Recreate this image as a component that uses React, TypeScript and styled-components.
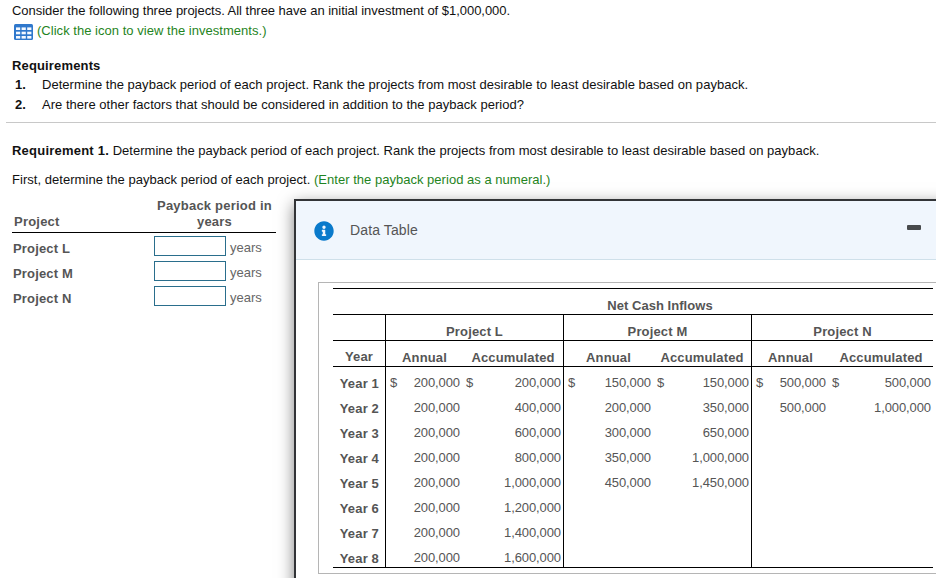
import React from 'react';
import styled, { createGlobalStyle } from 'styled-components';
import { FaInfoCircle } from 'react-icons/fa';

const GlobalStyle = createGlobalStyle`
  * { box-sizing: border-box; }
  html, body { margin: 0; padding: 0; background: #fff; overflow: hidden; }
  body { font: 13px/15px "Liberation Sans", Arial, sans-serif; color: #111; }
`;

const Page = styled.div`
  position: relative;
  width: 936px;
  height: 578px;
  overflow: hidden;
`;

const Problem = styled.section`
  height: 123px;
  margin-left: 6px;
  padding: 3px 0 0 6px;
  border-bottom: 1px solid #c8c8c8;
`;

const Line = styled.p<{ $top?: number; $spacing?: number }>`
  margin: ${(p) => p.$top ?? 0}px 0 0;
  letter-spacing: ${(p) => p.$spacing ?? 0}px;
  white-space: nowrap;
`;

const Hint = styled.span<{ $spacing?: number }>`
  color: #1f8422;
  letter-spacing: ${(p) => p.$spacing ?? 0.03}px;
`;

const IconLine = styled.div`
  display: flex;
  gap: 4px;
  margin: 5px 0 0 1px;
  height: 18px;
`;

const TableIcon = styled.svg`
  width: 20px;
  height: 18px;
  margin-top: 1px;
`;

const Heading = styled.h2`
  margin: 17px 0 4px;
  font-size: 13px;
  letter-spacing: 0.15px;
`;

const Requirements = styled.ol`
  display: grid;
  gap: 5px;
  margin: 0;
  padding: 0;
  list-style: none;
`;

const Requirement = styled.li`
  display: grid;
  grid-template-columns: 27px 1fr;
  padding-left: 3px;
  letter-spacing: 0.025px;
  white-space: nowrap;
`;

const Strong = styled.b`
  letter-spacing: 0.22px;
`;

const Answer = styled.section`
  padding: 20px 0 0 12px;
`;

const AnswerTable = styled.div`
  width: 264px;
  margin-top: 11px;
  color: #555;
`;

const AnswerHead = styled.div`
  display: grid;
  grid-template-columns: 1fr 124px;
  align-items: end;
  height: 35px;
  padding-left: 2px;
  border-bottom: 1px solid #000;
  font-weight: bold;
  line-height: 16px;
  letter-spacing: 0.22px;
`;

const Centered = styled.span`
  text-align: center;
  padding: 0 0 2px 1px;
`;

const HeadLabel = styled.span`
  padding-bottom: 2px;
`;

const AnswerRow = styled.label`
  display: grid;
  grid-template-columns: 141px 72px 1fr;
  height: 20px;
  margin-top: 5px;
  padding-left: 1px;

  &:first-of-type { margin-top: 3px; }
`;

const ProjectName = styled.b`
  padding-top: 5px;
  letter-spacing: 0.16px;
`;

const Field = styled.input`
  width: 72px;
  height: 20px;
  padding: 0 4px;
  border: 1px solid #2a6e8c;
  border-radius: 0;
  outline: none;
  background: #fff;
`;

const Unit = styled.span`
  padding: 4px 0 0 4px;
  color: #666;
`;

const Dialog = styled.section`
  position: absolute;
  left: 294px;
  top: 199px;
  width: 680px;
  height: 420px;
  border: 2px solid #323437;
  background: #fff;
  box-shadow: 0 5px 15px rgba(0, 0, 0, 0.5);
  color: #555;
`;

const HeaderBand = styled.div`
  background: #f0f6fd;
  border-bottom: 1px solid #cfe0ea;
`;

const DialogHeader = styled.header`
  display: flex;
  align-items: center;
  width: 640px;
  height: 58px;
  padding: 0 15px 0 18px;
`;

const InfoIcon = styled(FaInfoCircle)`
  width: 20px;
  height: 20px;
  margin-top: 2px;
  color: #0a7acb;
`;

const DialogTitle = styled.h3`
  flex: 1;
  margin: 1px 0 0 16px;
  font-size: 14px;
  font-weight: normal;
  letter-spacing: 0.12px;
`;

const Minimize = styled.button`
  width: 14px;
  height: 5px;
  margin: 0 0 5px;
  padding: 0;
  border: 0;
  border-radius: 1px;
  background: #484a4c;
`;

const Frame = styled.div`
  width: 640px;
  height: 292px;
  margin: 22px 0 0 22px;
  padding: 5px 0 0 14px;
  border: 1px solid #b5b5b5;
`;

const Sheet = styled.div`
  width: 600px;
  border: solid #000;
  border-width: 1px 0;
`;

const TitleRow = styled.div`
  height: 26px;
  padding: 9px 0 0 54px;
  border-bottom: 1px solid #000;
  text-align: center;
  font-weight: bold;
  letter-spacing: 0.04px;
`;

const GroupRow = styled.div`
  display: grid;
  grid-template-columns: 53px 178px 188px 1fr;
  height: 26px;
  border-bottom: 1px solid #000;
  font-weight: bold;
  text-align: center;
  letter-spacing: 0.14px;
`;

const columns = '53px 77px 101px 89px 99px 77px 1fr';

const ColumnRow = styled(GroupRow)`
  grid-template-columns: ${columns};
`;

const HeadCell = styled.span<{ $rule?: boolean; $top?: number }>`
  padding-top: ${(p) => p.$top ?? 9}px;
  border-right: ${(p) => (p.$rule ? '1px solid #000' : '0')};
`;

const DataRow = styled.div`
  display: grid;
  grid-template-columns: ${columns};
  height: 25px;
`;

const YearCell = styled.b`
  padding: 9px 6px 0 0;
  border-right: 1px solid #000;
  text-align: right;
  letter-spacing: 0.15px;
`;

const MoneyCell = styled.span<{ $rule?: boolean; $left: number; $right: number }>`
  display: flex;
  justify-content: space-between;
  padding: 8px ${(p) => p.$right}px 0 ${(p) => p.$left}px;
  border-right: ${(p) => (p.$rule ? '1px solid #000' : '0')};
  letter-spacing: -0.1px;
`;

type Entry = string | undefined;

const projects = ['L', 'M', 'N'];
const inflows: Entry[][] = [
  ['200,000', '200,000', '150,000', '150,000', '500,000', '500,000'],
  ['200,000', '400,000', '200,000', '350,000', '500,000', '1,000,000'],
  ['200,000', '600,000', '300,000', '650,000'],
  ['200,000', '800,000', '350,000', '1,000,000'],
  ['200,000', '1,000,000', '450,000', '1,450,000'],
  ['200,000', '1,200,000'],
  ['200,000', '1,400,000'],
  ['200,000', '1,600,000'],
];
const insets = [
  { left: 4, right: 3 },
  { left: 3, right: 2 },
  { left: 4, right: 2 },
  { left: 4, right: 2 },
  { left: 4, right: 3 },
  { left: 3, right: 2 },
];

function GridGlyph() {
  return (
    <TableIcon viewBox="0 0 20 18" aria-hidden="true">
      <rect x="1" y="0" width="19" height="16" rx="1.5" fill="#2f78cc" />
      {[3.4, 7.7, 12].map((y) =>
        [3, 8.6, 14.2].map((x) => (
          <rect key={`${x}-${y}`} x={x} y={y} width="4.2" height="2.6" fill="#f4f9ff" />
        )),
      )}
    </TableIcon>
  );
}

export default function App() {
  return (
    <>
      <GlobalStyle />
      <Page>
        <Problem>
          <Line $spacing={-0.03}>
            Consider the following three projects. All three have an initial investment of $1,000,000.
          </Line>
          <IconLine>
            <GridGlyph />
            <Hint $spacing={0.03}>(Click the icon to view the investments.)</Hint>
          </IconLine>
          <Heading>Requirements</Heading>
          <Requirements>
            <Requirement>
              <b>1.</b>
              <span>
                Determine the payback period of each project. Rank the projects from most desirable to least
                desirable based on payback.
              </span>
            </Requirement>
            <Requirement>
              <b>2.</b>
              <span>Are there other factors that should be considered in addition to the payback period?</span>
            </Requirement>
          </Requirements>
        </Problem>

        <Answer>
          <Line $spacing={0.03}>
            <Strong>Requirement 1.</Strong> Determine the payback period of each project. Rank the projects from
            most desirable to least desirable based on payback.
          </Line>
          <Line $top={14} $spacing={0.04}>
            First, determine the payback period of each project.{' '}
            <Hint $spacing={0.02}>(Enter the payback period as a numeral.)</Hint>
          </Line>
          <AnswerTable>
            <AnswerHead>
              <HeadLabel>Project</HeadLabel>
              <Centered>
                Payback period in
                <br />
                years
              </Centered>
            </AnswerHead>
            {projects.map((name) => (
              <AnswerRow key={name}>
                <ProjectName>Project {name}</ProjectName>
                <Field />
                <Unit>years</Unit>
              </AnswerRow>
            ))}
          </AnswerTable>
        </Answer>

        <Dialog>
          <HeaderBand>
            <DialogHeader>
              <InfoIcon />
              <DialogTitle>Data Table</DialogTitle>
              <Minimize aria-label="Minimize" />
            </DialogHeader>
          </HeaderBand>
          <Frame>
            <Sheet>
              <TitleRow>Net Cash Inflows</TitleRow>
              <GroupRow>
                <HeadCell $rule />
                {projects.map((name, i) => (
                  <HeadCell key={name} $rule={i < 2}>
                    Project {name}
                  </HeadCell>
                ))}
              </GroupRow>
              <ColumnRow>
                <HeadCell $rule $top={8}>
                  Year
                </HeadCell>
                {projects.map((name, i) => (
                  <React.Fragment key={name}>
                    <HeadCell>Annual</HeadCell>
                    <HeadCell $rule={i < 2}>Accumulated</HeadCell>
                  </React.Fragment>
                ))}
              </ColumnRow>
              {inflows.map((row, r) => (
                <DataRow key={r}>
                  <YearCell>Year {r + 1}</YearCell>
                  {insets.map(({ left, right }, c) => (
                    <MoneyCell key={c} $left={left} $right={right} $rule={c === 1 || c === 3}>
                      <span>{r === 0 ? '$' : ''}</span>
                      <span>{row[c]}</span>
                    </MoneyCell>
                  ))}
                </DataRow>
              ))}
            </Sheet>
          </Frame>
        </Dialog>
      </Page>
    </>
  );
}
